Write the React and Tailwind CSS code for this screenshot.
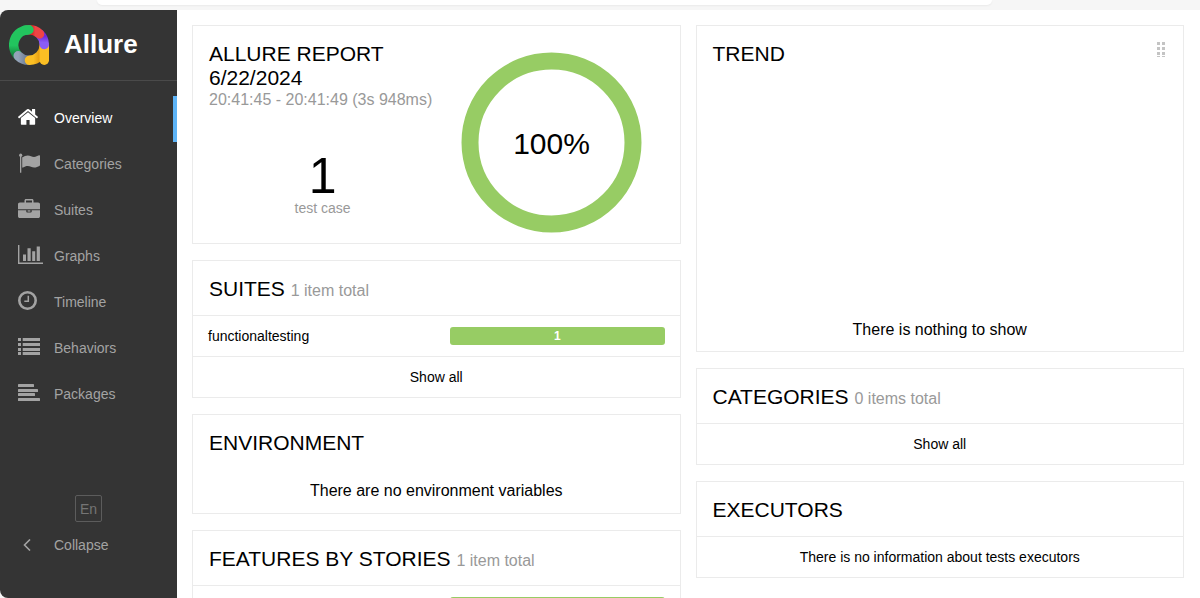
const navItems = [
  { label: "Overview", icon: HomeIcon, active: true },
  { label: "Categories", icon: FlagIcon },
  { label: "Suites", icon: BriefcaseIcon },
  { label: "Graphs", icon: ChartIcon },
  { label: "Timeline", icon: ClockIcon },
  { label: "Behaviors", icon: ListIcon },
  { label: "Packages", icon: AlignLeftIcon },
];

function HomeIcon() {
  return (
    <svg className="h-5 w-6" viewBox="89 96 1936 1613" fill="currentColor" aria-hidden="true">
      <path d="M1472 992v480q0 26-19 45t-45 19h-384v-384h-256v384h-384q-26 0-45-19t-19-45v-480q0-1 .5-3t.5-3l575-474 575 474q1 2 1 6zm223-69l-62 74q-8 9-21 11h-3q-13 0-21-7l-692-577-692 577q-12 8-24 7-13-2-21-11l-62-74q-8-10-7-23.5t11-21.500l719-599q32-26 76-26t76 26l244 204v-195q0-14 9-23t23-9h192q14 0 23 9t9 23v408l219 182q10 8 11 21.500t-7 23.500z" />
    </svg>
  );
}

function FlagIcon() {
  return (
    <svg className="h-5 w-6" viewBox="0 0 24 20" fill="currentColor" aria-hidden="true">
      <circle cx="2.7" cy="2.2" r="1.6" />
      <path d="M2 2h1.3v17.4a.4.4 0 0 1-.4.4h-.5a.4.4 0 0 1-.4-.4z" />
      <path d="M4.400 4.300C6 3.300 7.800 2.400 9.800 2.400c2.500 0 4 1.500 6.200 1.500 1.900 0 3.400-1 5-1.700.5-.2 1 0 1 .6v9.300c0 .4-.2.600-.6.800-1.500.8-3.200 1.600-5.200 1.600-2.500 0-4-1.600-6.400-1.600-1.900 0-3.300.7-4.700 1.600-.5.300-.9.100-.9-.4V5.100c0-.4 0-.6.200-.8z" />
    </svg>
  );
}

function BriefcaseIcon() {
  return (
    <svg className="h-5 w-6" viewBox="0 0 24 20" fill="currentColor" aria-hidden="true">
      <path d="M6.500 3.500V1.600C6.500.7 7.200 0 8 0h6c.9 0 1.500.7 1.500 1.600v1.900h4.700c1 0 1.800.8 1.800 1.800v5H0v-5c0-1 .8-1.800 1.800-1.800zm1.500 0h6V1.500H8z" />
      <path d="M0 11.300h8.300v1.500c0 .4.300.800.800.800h3.800c.4 0 .8-.4.800-.8v-1.500H22v5.900c0 1-.8 1.800-1.800 1.800H1.800C.8 19 0 18.200 0 17.200z" />
      <path d="M9.600 11.300h2.800v1.300H9.600z" />
    </svg>
  );
}

function ChartIcon() {
  return (
    <svg className="h-5 w-[25px]" viewBox="0 0 25 20" fill="currentColor" aria-hidden="true">
      <path d="M0 0h1.400v17.600H25V19H0z" />
      <path d="M5 9.500h3v6.500H5zM9.500 3.200h3.200V16H9.500zM14.200 6.300h3V16h-3zM18.700 1.500h3.200V16h-3.200z" />
    </svg>
  );
}

function ClockIcon() {
  return (
    <svg className="h-5 w-6" viewBox="0 0 24 20" fill="none" stroke="currentColor" aria-hidden="true">
      <circle cx="9.500" cy="9.500" r="8.200" strokeWidth="2.600" />
      <path d="M10.300 4.800v5.500H6.300" strokeWidth="1.500" />
    </svg>
  );
}

function ListIcon() {
  return (
    <svg className="h-5 w-6" viewBox="0 0 24 20" fill="currentColor" aria-hidden="true">
      <path d="M0 1h3v3H0zM0 6h3v3H0zM0 11h3v3H0zM0 15h3v3H0z" />
      <path d="M4.700 1H22v3H4.700zM4.700 6H22v3H4.700zM4.700 11H22v3H4.700zM4.700 15H22v3H4.700z" />
    </svg>
  );
}

function AlignLeftIcon() {
  return (
    <svg className="h-5 w-6" viewBox="0 0 24 20" fill="currentColor" aria-hidden="true">
      <rect x="0" y="1" width="16" height="3" rx=".6" />
      <rect x="0" y="6" width="20" height="3" rx=".6" />
      <rect x="0" y="10" width="17" height="3" rx=".6" />
      <rect x="0" y="15" width="22" height="3" rx=".6" />
    </svg>
  );
}

function Logo() {
  return (
    <svg className="h-10 w-10 shrink-0" viewBox="0 0 40 40" fill="none" strokeWidth="9.500" strokeLinecap="round" aria-hidden="true">
      <defs>
        <linearGradient id="logo-green" x1="0" y1="0" x2="0" y2="1">
          <stop offset="0.6" stopColor="#22c55e" />
          <stop offset="1" stopColor="#15803d" />
        </linearGradient>
        <linearGradient id="logo-red" x1="0" y1="0" x2="1" y2="0">
          <stop offset="0.3" stopColor="#dc2626" />
          <stop offset="0.6" stopColor="#ef4444" />
        </linearGradient>
        <linearGradient id="logo-purple" x1="0" y1="0" x2="0" y2="1">
          <stop offset="0.2" stopColor="#6d28d9" />
          <stop offset="0.8" stopColor="#8b5cf6" />
        </linearGradient>
        <linearGradient id="logo-gray" x1="0" y1="0" x2="1" y2="0">
          <stop offset="0" stopColor="#94a3b8" />
          <stop offset="1" stopColor="#64748b" />
        </linearGradient>
        <linearGradient id="logo-yellow" gradientUnits="userSpaceOnUse" x1="22" y1="0" x2="34" y2="0">
          <stop offset="0.2" stopColor="#fbbf24" />
          <stop offset="1" stopColor="#d98a06" />
        </linearGradient>
      </defs>
      <path d="M20 4.750A15.250 15.250 0 0 0 9.200 30.800" stroke="url(#logo-green)" />
      <path d="M9.200 30.800A15.250 15.250 0 0 0 20 35.250" stroke="url(#logo-gray)" />
      <path d="M20.500 35.250A15.250 15.250 0 0 0 35.250 20" stroke="url(#logo-yellow)" />
      <path d="M35.250 22v13.250" stroke="#fbbf24" />
      <path d="M30.800 9.200A15.250 15.250 0 0 1 35.250 19.500" stroke="url(#logo-purple)" />
      <path d="M20 4.750A15.250 15.250 0 0 1 30.500 8.900" stroke="url(#logo-red)" />
      <path d="M16 5.300A15.250 15.250 0 0 1 20 4.750" stroke="#22c55e" />
    </svg>
  );
}

function SideNav() {
  return (
    <aside className="flex w-[177px] shrink-0 flex-col rounded-l-lg bg-[#343434] text-sm text-[#a3a3a3]">
      <div className="flex h-[71px] items-center gap-[15px] border-b border-[#4a4a4a] pl-[9px]">
        <Logo />
        <span className="text-[26px] font-bold text-white">Allure</span>
      </div>
      <nav className="mt-[15px]">
        <ul>
          {navItems.map(({ label, icon: Icon, active }) => (
            <li key={label}>
              <a
                href="#"
                className={`flex h-[46px] items-center border-r-4 pb-0.5 pl-[18px] ${active ? "border-[#5eb4f7] text-white" : "border-transparent"}`}
              >
                <span className="w-[36px] pb-0.5">
                  <Icon />
                </span>
                {label}
              </a>
            </li>
          ))}
        </ul>
      </nav>
      <div className="mt-auto flex flex-col items-center pb-[34px]">
        <button className="h-[27px] w-[27px] rounded-xs border border-[#5c5c5c] text-[#757575]">En</button>
        <button className="mt-1 flex h-[38px] w-full items-center pl-[23px]">
          <span className="w-[31px]">
            <svg className="h-3 w-2" viewBox="0 0 8 12" fill="none" stroke="currentColor" strokeWidth="1.600" aria-hidden="true">
              <path d="M7 .5 1.500 6 7 11.500" />
            </svg>
          </span>
          Collapse
        </button>
      </div>
    </aside>
  );
}

function Card({ children }) {
  return <section className="border border-[#ebebeb] bg-white">{children}</section>;
}

function CardTitle({ children, total }) {
  return (
    <h2 className="px-4 pt-4 pb-[14px] text-[21px] leading-6">
      {children} {total && <span className="text-base leading-none text-[#999]">{total}</span>}
    </h2>
  );
}

function Row({ children }) {
  return <div className="flex h-[41px] items-center border-t border-[#ebebeb] px-[15px] text-sm">{children}</div>;
}

function ShowAll() {
  return (
    <Row>
      <a href="#" className="flex-1 text-center">
        Show all
      </a>
    </Row>
  );
}

function StatusRow({ name, passed }) {
  return (
    <Row>
      <a href="#" className="flex-1">
        {name}
      </a>
      <div className="h-[18px] w-[47%] rounded-[3px] bg-[#97cc64] text-center text-xs leading-[18px] font-bold text-white">
        {passed}
      </div>
    </Row>
  );
}

function Summary() {
  return (
    <Card>
      <div className="grid grid-cols-2 px-4 pt-4 pb-[10px]">
        <div>
          <h2 className="text-[21px] leading-6">ALLURE REPORT 6/22/2024</h2>
          <p className="text-base leading-5 whitespace-nowrap text-[#999]">20:41:45 - 20:41:49 (3s 948ms)</p>
          <div className="mt-11 text-center">
            <div className="text-[50px] leading-[44px]">1</div>
            <div className="text-sm text-[#999]">test case</div>
          </div>
        </div>
        <div className="flex justify-center pt-[10px] pl-1">
          <svg className="h-[181px] w-[181px]" viewBox="0 0 181 181">
            <circle cx="90.500" cy="90.500" r="81.500" fill="none" stroke="#97cc64" strokeWidth="17" />
            <text x="90.500" y="102" textAnchor="middle" fontSize="30">
              100%
            </text>
          </svg>
        </div>
      </div>
    </Card>
  );
}

function Trend() {
  return (
    <Card>
      <div className="flex items-start justify-between pr-[18px]">
        <CardTitle>TREND</CardTitle>
        <svg className="mt-4 h-4 w-2" viewBox="0 0 8 16" fill="#c4c4c4" aria-hidden="true">
          <path d="M0 0h3v3H0zM5 0h3v3H5zM0 5h3v3H0zM5 5h3v3H5zM0 10h3v3H0zM5 10h3v3H5zM0 14h3v1H0zM5 14h3v1H5z" />
        </svg>
      </div>
      <p className="pt-[238px] pb-[9px] text-center text-base">There is nothing to show</p>
    </Card>
  );
}

export default function App() {
  return (
    <div className="flex h-screen flex-col overflow-hidden bg-[#f6f6f6] font-['Liberation_Sans',Arial,sans-serif] text-black">
      <div className="h-[10px] shrink-0 pr-[208px] pl-[97px]">
        <div className="h-[5px] rounded-b-full bg-white shadow-xs"></div>
      </div>
      <div className="flex min-h-0 flex-1">
        <SideNav />
        <main className="grid flex-1 grid-cols-2 items-start gap-[15px] overflow-hidden bg-white pt-[15px] pr-4 pl-[15px]">
          <div className="flex flex-col gap-4">
            <Summary />
            <Card>
              <CardTitle total="1 item total">SUITES</CardTitle>
              <StatusRow name="functionaltesting" passed={1} />
              <ShowAll />
            </Card>
            <Card>
              <CardTitle>ENVIRONMENT</CardTitle>
              <p className="py-[10px] text-center text-base">There are no environment variables</p>
            </Card>
            <Card>
              <CardTitle total="1 item total">FEATURES BY STORIES</CardTitle>
              <StatusRow name="functionaltesting" passed={1} />
              <ShowAll />
            </Card>
          </div>
          <div className="flex flex-col gap-4">
            <Trend />
            <Card>
              <CardTitle total="0 items total">CATEGORIES</CardTitle>
              <ShowAll />
            </Card>
            <Card>
              <CardTitle>EXECUTORS</CardTitle>
              <Row>
                <p className="flex-1 text-center">There is no information about tests executors</p>
              </Row>
            </Card>
          </div>
        </main>
      </div>
    </div>
  );
}
